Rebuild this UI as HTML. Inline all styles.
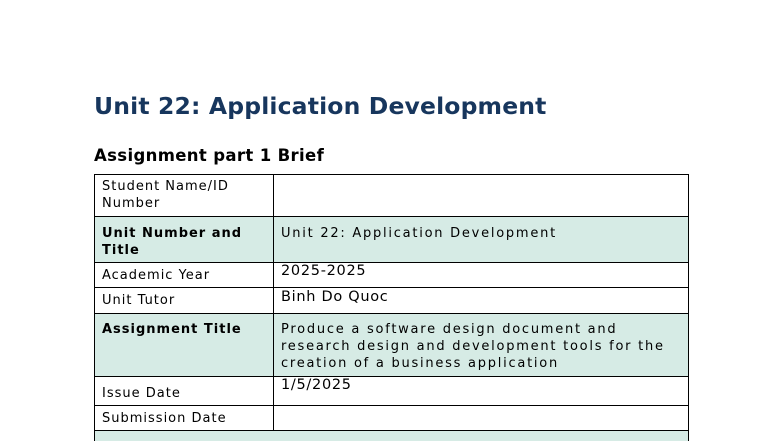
<!DOCTYPE html><html><head><style>
body{margin:0;width:784px;height:441px;overflow:hidden;background:#fff;font-family:"DejaVu Sans","Liberation Sans",sans-serif;position:relative}
.a{position:absolute;white-space:nowrap}
.c{position:absolute;box-sizing:border-box}
.h{position:absolute;left:94px;width:595px;height:1px;background:#000}
.v{position:absolute;width:1px;background:#000}
.t{font-size:13px;color:#000;line-height:17px;letter-spacing:1px}
.w{letter-spacing:1.75px}
.b{font-weight:bold}
.n{font-size:14.5px;letter-spacing:0.7px}
</style></head><body>
<div class="a" style="left:94px;top:92px;font-size:23.5px;font-weight:bold;color:#17365d;letter-spacing:0.15px">Unit 22: Application Development</div>
<div class="a" style="left:94px;top:146px;font-size:16.5px;font-weight:bold;color:#000;letter-spacing:0.35px">Assignment part 1 Brief</div>
<div class="c" style="left:94px;top:216px;width:595px;height:46px;background:#d6ebe5"></div>
<div class="c" style="left:94px;top:313px;width:595px;height:63px;background:#d6ebe5"></div>
<div class="c" style="left:94px;top:430px;width:595px;height:11px;background:#d6ebe5"></div>
<div class="h" style="top:174px"></div><div class="h" style="top:216px"></div><div class="h" style="top:262px"></div><div class="h" style="top:287px"></div><div class="h" style="top:313px"></div><div class="h" style="top:376px"></div><div class="h" style="top:405px"></div><div class="h" style="top:430px"></div>
<div class="v" style="left:94px;top:174px;height:267px"></div>
<div class="v" style="left:273px;top:174px;height:256px"></div>
<div class="v" style="left:688px;top:174px;height:267px"></div>
<div class="a t" style="left:102px;top:178px">Student Name/ID<br>Number</div>
<div class="a t b" style="left:102px;top:225px">Unit Number and<br>Title</div>
<div class="a t w" style="left:281px;top:225px">Unit 22: Application Development</div>
<div class="a t" style="left:102px;top:267px">Academic Year</div>
<div class="a n" style="left:281px;top:263px">2025-2025</div>
<div class="a t" style="left:102px;top:292px">Unit Tutor</div>
<div class="a n" style="left:281px;top:289px">Binh Do Quoc</div>
<div class="a t b" style="left:102px;top:321px">Assignment Title</div>
<div class="a t w" style="left:281px;top:321px">Produce a software design document and<br>research design and development tools for the<br>creation of a business application</div>
<div class="a t" style="left:102px;top:385px">Issue Date</div>
<div class="a n" style="left:281px;top:377px">1/5/2025</div>
<div class="a t" style="left:102px;top:410px">Submission Date</div>
</body></html>
